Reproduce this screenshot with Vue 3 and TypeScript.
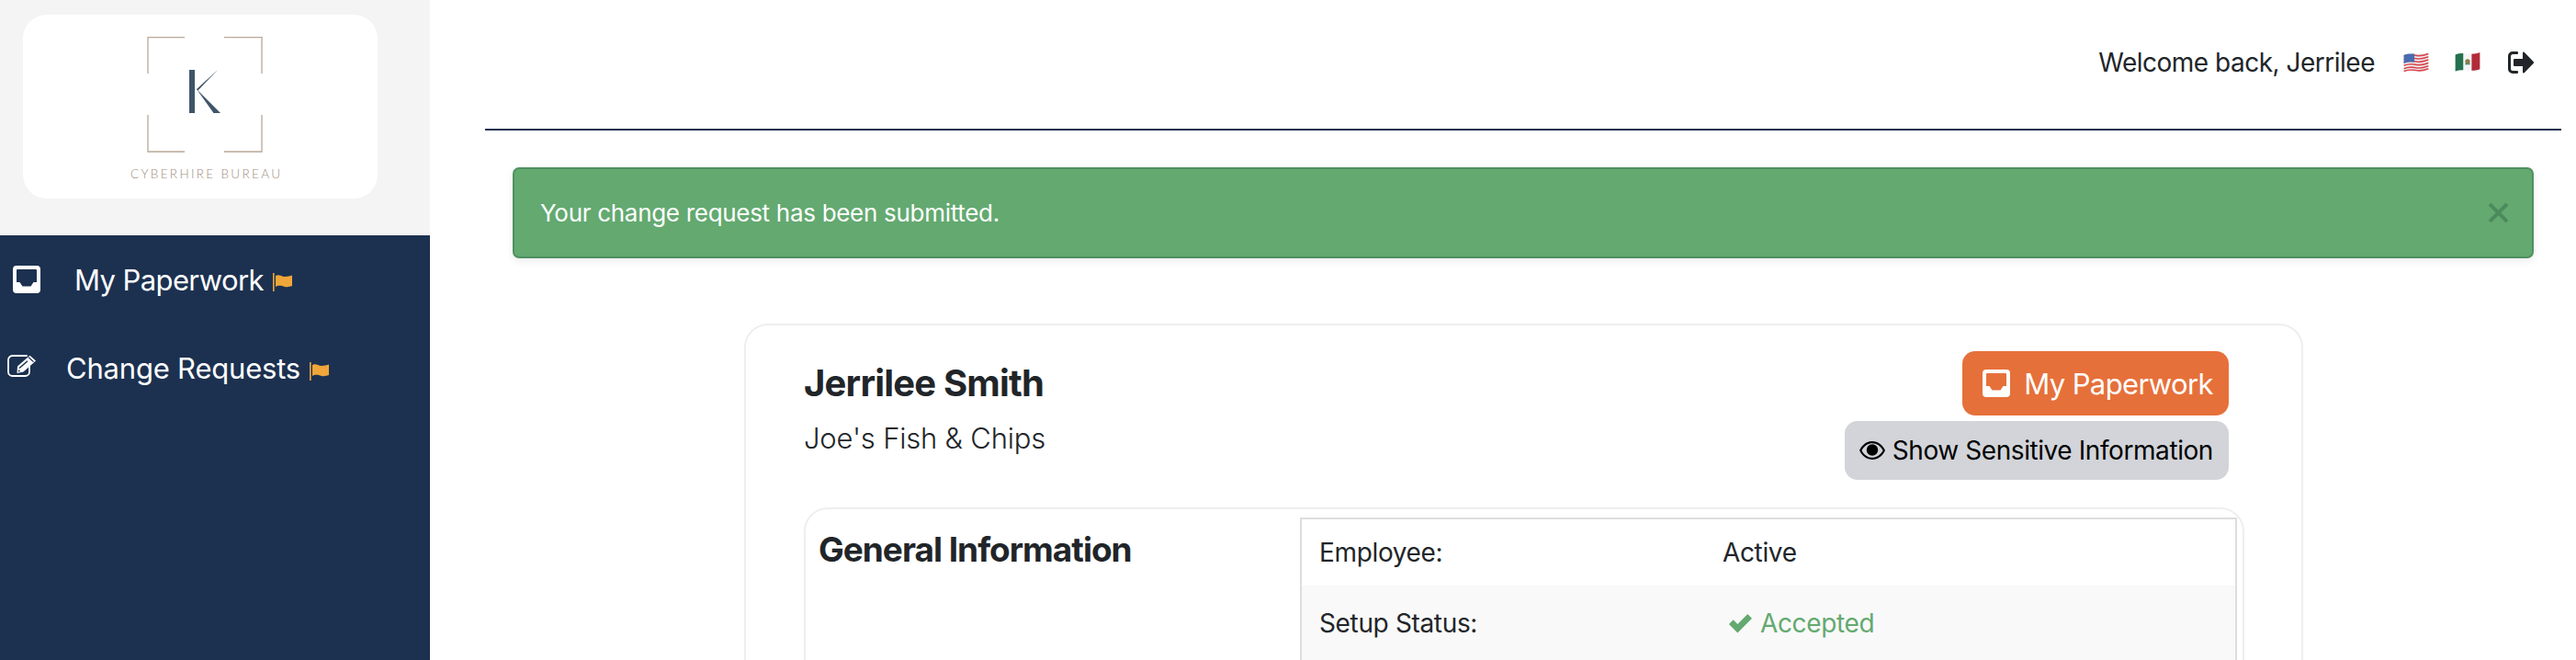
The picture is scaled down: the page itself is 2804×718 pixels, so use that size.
<script setup lang="ts">
const rows: { label: string; value: string; ok?: boolean }[] = [
  { label: 'Employee:', value: 'Active' },
  { label: 'Setup Status:', value: 'Accepted', ok: true },
]
</script>

<template>
  <div class="app">
    <aside class="sidebar">
      <div class="brand">
        <div class="logo-card">
          <svg class="logo" viewBox="25 16 386 200" width="386" height="200" aria-label="Cyberhire Bureau logo">
            <g fill="none" stroke="#b9a898" stroke-width="1.3">
              <path d="M161 80V40.600H201M244 40.600H285V80" />
              <path d="M161 125V165H201M244 165H285V125" />
            </g>
            <path fill="#3f5468" d="M206 76h6v47h-6zM214 97l23-21-21.500 22.500L240 123h-7.500z" />
            <text x="142" y="194" class="logo-text" textLength="163">CYBERHIRE BUREAU</text>
          </svg>
        </div>
      </div>
      <nav class="nav">
        <a class="nav-item paperwork">
          <svg class="ic-inbox" viewBox="0 0 30 30" width="30" height="30">
            <path fill="#fff" fill-rule="evenodd" d="M4 0H26a4 4 0 0 1 4 4V26a4 4 0 0 1-4 4H4a4 4 0 0 1-4-4V4a4 4 0 0 1 4-4ZM5 4a1 1 0 0 0-1 1V18H7.500L10.500 22.500H19.500L22.500 18H26V5a1 1 0 0 0-1-1Z" />
          </svg>
          <span>My Paperwork</span>
          <svg class="flag" viewBox="0 0 22 20" width="22" height="20">
            <path fill="#f0a63a" d="M0 0h1.600v20H0zM3 3c4-2 6 1 10 1 3 0 6-1 8-1.500V14c-3 1-5 1.500-8 1-4-1-6-2-10 0z" />
          </svg>
        </a>
        <a class="nav-item requests">
          <svg class="ic-edit" viewBox="0 0 32 26" width="32" height="26">
            <path fill="none" stroke="#fff" stroke-width="1.800" stroke-linecap="round" d="M21 2H5.500A4.500 4.500 0 0 0 1 6.500v13A4.500 4.500 0 0 0 5.500 24h14a4.500 4.500 0 0 0 4.500-4.500V13" />
            <path fill="#fff" d="M11 13.500 24.500 1.800 31 7.500 17.500 19.500 10.500 21z" />
            <path fill="#1c3150" d="M23.500 3.200l5.500 5-1 .9-5.500-5zM12.500 15l1 1 9-7.800-1-1zM12.200 17.200l-.5 2.300 2.500-.5z" />
          </svg>
          <span>Change Requests</span>
          <svg class="flag" viewBox="0 0 22 20" width="22" height="20">
            <path fill="#f0a63a" d="M0 0h1.600v20H0zM3 3c4-2 6 1 10 1 3 0 6-1 8-1.500V14c-3 1-5 1.500-8 1-4-1-6-2-10 0z" />
          </svg>
        </a>
      </nav>
    </aside>

    <main class="main">
      <header class="topbar">
        <span class="welcome">Welcome back, Jerrilee</span>
        <svg class="country" viewBox="0 0 28 22" width="28" height="21" aria-label="English">
          <path fill="#efeff2" d="M0 3c5-2 9-2 14-1s9 0 14-2v19c-5 2-9 2-14 1s-9 0-14 2z" />
          <path fill="none" stroke="#d8474f" stroke-width="1.700" d="M0 4.500c5-2 9-2 14-1s9 0 14-2M0 8c5-2 9-2 14-1s9 0 14-2M0 11.500c5-2 9-2 14-1s9 0 14-2M0 15c5-2 9-2 14-1s9 0 14-2M0 18.500c5-2 9-2 14-1s9 0 14-2M0 21.500c5-2 9-2 14-1s9 0 14-2" />
          <path fill="#4a6bb0" d="M0 3c4-1.600 8-1.800 12-1.300v9.500c-4-.5-8-.2-12 1.300z" />
        </svg>
        <svg class="country mx" viewBox="0 0 28 22" width="28" height="21" aria-label="Español">
          <path fill="#24704f" d="M0 2.500c3-1 6-1.500 9.300-1.300v19c-3.300-.2-6.300.3-9.300 1.300z" />
          <path fill="#f4f4f4" d="M9.300 1.200c3 .1 6 .7 9.300.6v19c-3.300.1-6.300-.5-9.300-.6z" />
          <path fill="#b22b3a" d="M18.600 1.800C22 1.700 25 1 28 0v19c-3 1-6 1.700-9.400 1.800z" />
          <circle cx="14" cy="10.500" r="2.800" fill="#8d7a4a" />
          <path fill="#4d8a66" d="M11.300 12.500h5.400v1.500h-5.400z" />
        </svg>
        <svg class="logout" viewBox="0 0 28 24" width="28" height="24" aria-label="Sign out">
          <path fill="#212529" d="M5 0h5a1 1 0 0 1 1 1v1a1 1 0 0 1-1 1H5.500A2.500 2.500 0 0 0 3 5.500v13A2.500 2.500 0 0 0 5.500 21H10a1 1 0 0 1 1 1v1a1 1 0 0 1-1 1H5a5 5 0 0 1-5-5V5a5 5 0 0 1 5-5Z" />
          <path fill="#212529" d="M7 8h9V1.500a1 1 0 0 1 1.700-.7L27.600 11a1.400 1.400 0 0 1 0 2l-9.900 10.200a1 1 0 0 1-1.700-.7V16H7a1 1 0 0 1-1-1V9a1 1 0 0 1 1-1Z" />
        </svg>
      </header>

      <div class="alert">
        <span>Your change request has been submitted.</span>
        <svg class="close" viewBox="0 0 21 21" width="21" height="21" aria-label="Close">
          <path fill="none" stroke="#4c8a5c" stroke-width="4" d="M1 1l19 19M20 1 1 20" />
        </svg>
      </div>

      <section class="card">
        <div class="card-head">
          <div class="who">
            <h1>Jerrilee Smith</h1>
            <p>Joe's Fish &amp; Chips</p>
          </div>
          <div class="actions">
            <button class="btn btn-orange" type="button">
              <svg viewBox="0 0 30 30" width="30" height="30">
                <path fill="#fff" fill-rule="evenodd" d="M4 0H26a4 4 0 0 1 4 4V26a4 4 0 0 1-4 4H4a4 4 0 0 1-4-4V4a4 4 0 0 1 4-4ZM5 4a1 1 0 0 0-1 1V18H7.500L10.500 22.500H19.500L22.500 18H26V5a1 1 0 0 0-1-1Z" />
              </svg>
              <span>My Paperwork</span>
            </button>
            <button class="btn btn-grey" type="button">
              <svg viewBox="0 0 28 20" width="28" height="20">
                <path fill="#000" fill-rule="evenodd" d="M14 0c6 0 11 3.800 14 10-3 6.200-8 10-14 10S3 16.200 0 10C3 3.800 8 0 14 0ZM14 2.200c-4.800 0-9 2.900-11.600 7.800C5 14.900 9.200 17.800 14 17.800S23 14.900 25.600 10C23 5.100 18.800 2.200 14 2.200Z" />
                <circle cx="14" cy="9.500" r="6.200" fill="#000" />
              </svg>
              <span>Show Sensitive Information</span>
            </button>
          </div>
        </div>

        <div class="info">
          <h2>General Information</h2>
          <div class="table">
            <div v-for="row in rows" :key="row.label" class="row">
              <span class="label">{{ row.label }}</span>
              <span class="value" :class="{ ok: row.ok }">
                <svg v-if="row.ok" viewBox="0 0 24 20" width="25" height="21">
                  <path fill="#63a970" d="M0 10.500 4.500 6 9 10.500 19.500 0 24 4.500 9 19.500z" />
                </svg>
                {{ row.value }}
              </span>
            </div>
          </div>
        </div>
      </section>
    </main>
  </div>
</template>

<style scoped>
.app {
  display: flex;
  width: 2804px;
  height: 718px;
  overflow: hidden;
  background: #fff;
  color: #212529;
  font-family: Inter, "Liberation Sans", sans-serif;
}

/* Sidebar */
.sidebar {
  display: flex;
  flex-direction: column;
  flex: 0 0 468px;
  background: #1c3150;
}
.brand {
  flex: 0 0 256px;
  box-sizing: border-box;
  padding: 16px 57px 0 25px;
  background: #f4f4f4;
}
.logo-card {
  height: 200px;
  border-radius: 26px;
  background: #fff;
}
.logo {
  display: block;
}
.logo-text {
  font-family: Lato, sans-serif;
  font-size: 13.5px;
  font-weight: 300;
  fill: #9f8d80;
}
.nav-item {
  display: flex;
  align-items: center;
  height: 97px;
  color: #fff;
  font-size: 31px;
}
.paperwork {
  padding-left: 14px;
  letter-spacing: -0.6px;
}
.ic-inbox {
  margin-bottom: 1px;
}
.paperwork span {
  margin-left: 37px;
}
.requests {
  padding-left: 8px;
  letter-spacing: -0.2px;
}
.ic-edit {
  margin-bottom: 7px;
}
.requests span {
  margin: 0 0 2px 32px;
}
.flag {
  margin: 4px 0 0 10px;
}

/* Main column */
.main {
  flex: 1;
  min-width: 0;
  padding: 0 16px 0 60px;
}
.topbar {
  display: flex;
  align-items: center;
  justify-content: flex-end;
  box-sizing: border-box;
  height: 142px;
  padding: 0 30px 6px 0;
  border-bottom: 2px solid #1c3150;
}
.welcome {
  margin: 2px 31px 0 0;
  font-size: 28px;
  letter-spacing: -0.5px;
}
.country {
  margin-right: 28px;
}
.country.mx {
  margin-right: 30px;
}
.logout {
  margin-top: 2px;
}

/* Alert */
.alert {
  display: flex;
  align-items: center;
  justify-content: space-between;
  box-sizing: border-box;
  height: 99px;
  margin: 40px 30px 0;
  padding: 0 26px 0 28px;
  border: 2px solid #4f9160;
  border-radius: 7px;
  background: #63a970;
  box-shadow: 0 3px 8px rgba(0, 0, 0, 0.08);
  color: #fff;
  font-size: 26px;
  letter-spacing: -0.3px;
}

/* Profile card */
.card {
  box-sizing: border-box;
  height: 600px;
  margin: 71px 281px 0 282px;
  padding: 28px 62px 0 63px;
  border: 2px solid #eeeeee;
  border-radius: 26px;
}
.card-head {
  display: flex;
  justify-content: space-between;
  padding-right: 17px;
}
h1 {
  margin: 12px 0 0;
  font-size: 40px;
  font-weight: 700;
  letter-spacing: -0.8px;
  line-height: 46px;
}
.who p {
  margin: 19px 0 0;
  font-size: 31px;
  font-weight: 300;
  letter-spacing: -0.2px;
  line-height: 36px;
}
.actions {
  display: flex;
  flex-direction: column;
  align-items: flex-end;
  gap: 6px;
}
.btn {
  display: flex;
  align-items: center;
  border: 0;
  border-radius: 14px;
  font-family: inherit;
}
.btn-orange {
  gap: 15px;
  height: 70px;
  padding: 0 17px 0 22px;
  background: #e6703a;
  color: #fff;
  font-size: 31px;
  letter-spacing: -0.6px;
}
.btn-grey {
  gap: 8px;
  height: 64px;
  padding: 0 17px 0 16px;
  background: #d2d4d9;
  color: #000;
  font-size: 28px;
  letter-spacing: -0.42px;
}

/* General information */
.info {
  display: grid;
  grid-template-columns: 538px 1020px;
  height: 300px;
  margin-top: 30px;
  padding-top: 9px;
  border: 2px solid #eeeeee;
  border-radius: 26px;
}
h2 {
  margin: 13px 0 0 14px;
  font-size: 37px;
  font-weight: 700;
  letter-spacing: -1px;
  line-height: 44px;
}
.table {
  box-sizing: border-box;
  border: 2px solid #dddddd;
  border-bottom: 0;
}
.row {
  display: grid;
  grid-template-columns: 439px 1fr;
  padding: 20px 19px;
  font-size: 28px;
  letter-spacing: -0.35px;
  line-height: 32px;
}
.row:nth-child(even) {
  height: 200px;
  padding-top: 25px;
  background: #f9f9f9;
}
.value {
  display: flex;
  align-items: center;
  align-self: start;
  gap: 9px;
}
.value.ok svg {
  margin-left: 7px;
}
.value.ok {
  color: #63a970;
}
</style>
